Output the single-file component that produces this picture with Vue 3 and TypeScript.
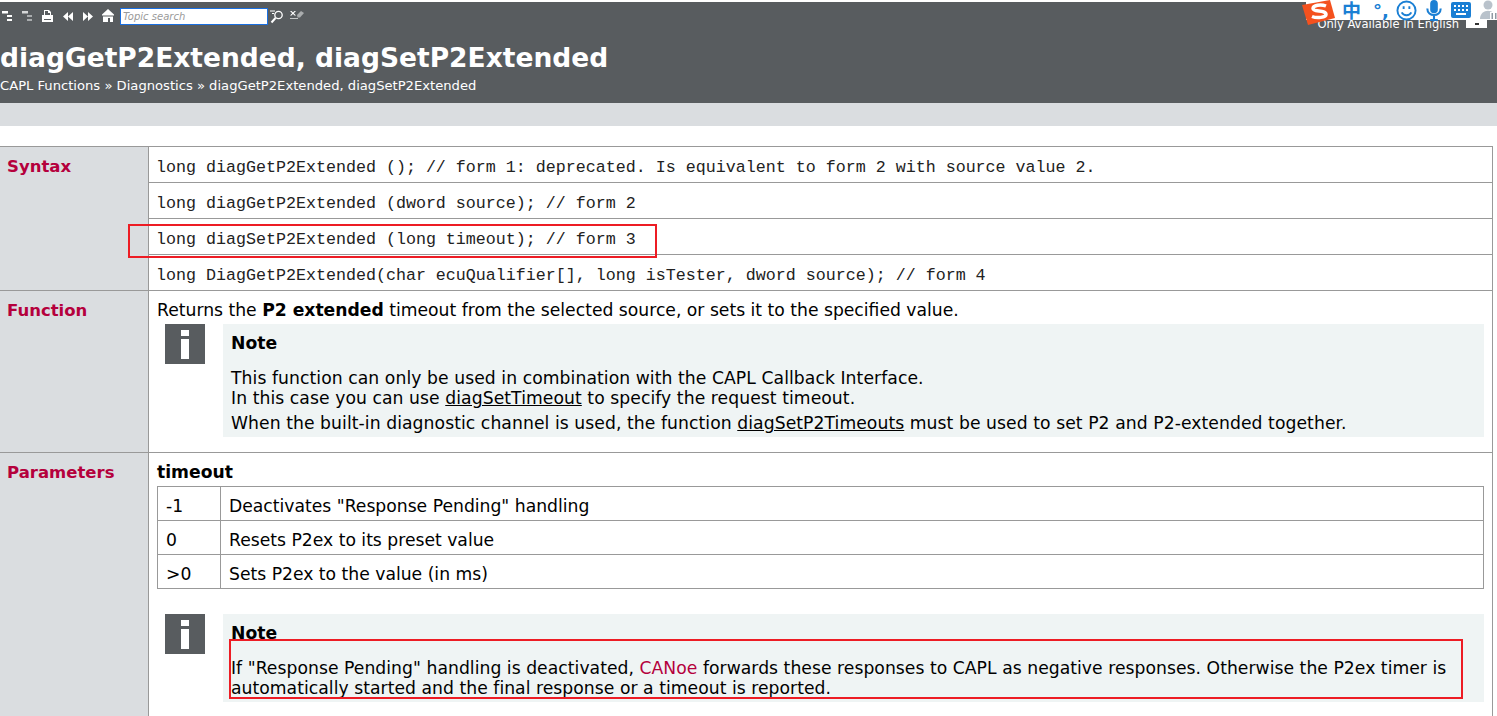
<script setup lang="ts">
const syntaxLines = [
  "long diagGetP2Extended (); // form 1: deprecated. Is equivalent to form 2 with source value 2.",
  "long diagGetP2Extended (dword source); // form 2",
  "long diagSetP2Extended (long timeout); // form 3",
  "long DiagGetP2Extended(char ecuQualifier[], long isTester, dword source); // form 4",
];

const params = [
  { value: "-1", text: 'Deactivates "Response Pending" handling' },
  { value: "0", text: "Resets P2ex to its preset value" },
  { value: ">0", text: "Sets P2ex to the value (in ms)" },
];
</script>

<template>
  <div class="page">
    <header class="header">
      <div class="toolbar">
        <div class="tools">
          <svg class="tool" viewBox="0 0 14 14" fill="#fff"><path d="M2 2h6v2.500H2zM7 6h5v2H7zM7 10h5v2H7z" /></svg>
          <svg class="tool" viewBox="0 0 14 14" fill="#a9acae"><path d="M2 2h6v2.500H2z" fill="#d5d7d8" /><path d="M7 6h5v2H7zM7 10h5v2H7z" /></svg>
          <svg class="tool" viewBox="0 0 14 14" fill="#fff"><path d="M4 1h5l2 2v3h2v7H2V6h2zM5 2v4h5V4H8V2zM4 10v1h7v-1z" fill-rule="evenodd" /></svg>
          <svg class="tool" viewBox="0 0 14 14" fill="#fff"><path d="M8 3v9L3 7.500zM13 3v9L8 7.500z" /></svg>
          <svg class="tool" viewBox="0 0 14 14" fill="#fff"><path d="M3 3v9l5-4.500zM8 3v9l5-4.500z" /></svg>
          <svg class="tool" viewBox="0 0 14 14" fill="#fff"><path d="M8 0 14 5.500v1H2v-1zM3 7.500h10V13h-3V9H8v4H3z" /></svg>
        </div>
        <input class="search" type="text" placeholder="Topic search" />
        <svg class="find" viewBox="0 0 14 14" fill="none" stroke="#fff"><circle cx="8.500" cy="5" r="3.700" stroke-width="1.300" /><path d="M5.500 8 1.500 12.500" stroke-width="2" /><path d="M0 1h5M2 3.500h2" stroke-width="1" /></svg>
        <svg class="clear" viewBox="0 0 15 12" fill="#fff"><path d="M0 1h1.500l1.500 1.500L4.500 1H6L3.800 3.200 6 5.500H4.500L3 4 1.500 5.500H0l2.200-2.300z" /><path d="M0 8h8v1H0z" fill="#c4c6c7" /><path d="M7 5l4-4 3 2-4 4.500H7.500z" fill="#a9acae" /></svg>
      </div>
      <h1 class="title">diagGetP2Extended, diagSetP2Extended</h1>
      <div class="crumbs">CAPL Functions » Diagnostics » diagGetP2Extended, diagSetP2Extended</div>
    </header>
    <div class="band"></div>

    <span class="lang">Only Available In English<span class="lang-box"><i></i></span></span>

    <div class="ime">
      <svg class="ime-logo" viewBox="0 0 34 25"><path d="M1 5 29 0l5 18-27 7z" fill="#f4511e" /><path d="M25 6c-5-2-13-1-13 2.500 0 4 13 1 13 6 0 3-9 4-14 2" fill="none" stroke="#fff" stroke-width="3.500" /></svg>
      <span class="ime-zh">中</span>
      <span class="ime-punct">°,</span>
      <svg class="ime-icon smile" viewBox="0 0 22 22" fill="none" stroke="#1a7fd4" stroke-width="2"><circle cx="11" cy="11" r="9.500" /><path d="M6 13c2 4 8 4 10 0" /><path d="M8 6.500v3M14 6.500v3" /></svg>
      <svg class="ime-icon mic" viewBox="0 0 16 22" fill="#1a7fd4"><rect x="4" y="0" width="8" height="14" rx="4" /><path d="M1 9c0 9 14 9 14 0M8 16v5M4 21h8" fill="none" stroke="#1a7fd4" stroke-width="2.200" /></svg>
      <svg class="ime-icon kbd" viewBox="0 0 20 16" fill="#1a7fd4"><path fill-rule="evenodd" d="M2 0h16a2 2 0 0 1 2 2v12a2 2 0 0 1-2 2H2a2 2 0 0 1-2-2V2a2 2 0 0 1 2-2zM3 3v2h2V3zm4 0v2h2V3zm4 0v2h2V3zm4 0v2h2V3zM3 7v2h2V7zm4 0v2h2V7zm4 0v2h2V7zm4 0v2h2V7zM5 11v2h10v-2z" /></svg>
      <svg class="ime-icon person" viewBox="0 0 18 20" fill="#b9c2cb"><circle cx="8" cy="5" r="4.500" /><path d="M0 19c0-11 16-11 16 0z" /><path d="M10 12h8v8h-8z" fill="#fff" /><path d="M11.500 13h1.500v6h-1.500zM15 13h1.500v6H15z" fill="#8f99a3" /></svg>
    </div>

    <main class="content">
      <section class="row">
        <div class="label">Syntax</div>
        <div class="body syntax">
          <div v-for="line in syntaxLines" :key="line" class="code">{{ line }}</div>
        </div>
      </section>

      <section class="row">
        <div class="label">Function</div>
        <div class="body function">
          <p class="lead">Returns the <b>P2 extended</b> timeout from the selected source, or sets it to the specified value.</p>
          <div class="note first">
            <div class="note-icon"><span class="dot"></span><span class="stem"></span></div>
            <div class="note-box">
              <div class="note-title">Note</div>
              <p>This function can only be used in combination with the CAPL Callback Interface.<br />In this case you can use <u>diagSetTimeout</u> to specify the request timeout.</p>
              <p>When the built-in diagnostic channel is used, the function <u>diagSetP2Timeouts</u> must be used to set P2 and P2-extended together.</p>
            </div>
          </div>
        </div>
      </section>

      <section class="row">
        <div class="label">Parameters</div>
        <div class="body parameters">
          <div class="param-name">timeout</div>
          <table class="param-table">
            <tbody>
              <tr v-for="p in params" :key="p.value">
                <td class="val">{{ p.value }}</td>
                <td>{{ p.text }}</td>
              </tr>
            </tbody>
          </table>
          <div class="note second">
            <div class="note-icon"><span class="dot"></span><span class="stem"></span></div>
            <div class="note-box">
              <div class="note-title">Note</div>
              <p>If "Response Pending" handling is deactivated, <span class="brand">CANoe</span> forwards these responses to CAPL as negative responses. Otherwise the P2ex timer is automatically started and the final response or a timeout is reported.</p>
            </div>
          </div>
        </div>
      </section>
    </main>

    <div class="mark mark-syntax"></div>
    <div class="mark mark-note"></div>
  </div>
</template>

<style>
html,
body {
  margin: 0;
  overflow: hidden;
}
</style>

<style scoped>
.page {
  position: relative;
  width: 1497px;
  height: 716px;
  overflow: hidden;
  background: #fff;
  font-family: "DejaVu Sans", Verdana, sans-serif;
  font-size: 17.2px;
  color: #000;
}

.header {
  margin-top: 2px;
  height: 101px;
  background: #585c5f;
  color: #fff;
}

.toolbar {
  display: flex;
  align-items: center;
  height: 26px;
  padding-top: 2px;
  box-sizing: border-box;
}

.tools {
  display: flex;
  gap: 6px;
  margin-right: 6px;
}

.tool {
  width: 14px;
  height: 14px;
}

.find {
  width: 14px;
  height: 14px;
  margin-left: 2px;
  margin-top: 1px;
}

.clear {
  width: 15px;
  height: 12px;
  margin-left: 6px;
}

.search {
  width: 148px;
  height: 17px;
  box-sizing: border-box;
  border: 1px solid #1a6fe0;
  outline: none;
  padding: 0 2px;
  margin: 0;
  font-family: "DejaVu Sans", Verdana, sans-serif;
  font-size: 10px;
  font-style: italic;
}

.search::placeholder {
  color: #9a9a9a;
}

.lang {
  position: absolute;
  right: 10px;
  top: 17px;
  display: flex;
  align-items: center;
  gap: 7px;
  font-size: 11.500px;
  color: #fff;
}

.lang-box {
  display: flex;
  align-items: center;
  justify-content: center;
  width: 21px;
  height: 8px;
  background: #fff;
}

.lang-box i {
  width: 4px;
  height: 2px;
  background: #333;
}

.title {
  margin: 0;
  padding-top: 13px;
  height: 49px;
  box-sizing: border-box;
  font-size: 26.500px;
  line-height: 34px;
  font-weight: 700;
}

.crumbs {
  font-size: 13.140px;
  line-height: 18px;
}

.band {
  height: 23px;
  background: #dadde0;
  margin-bottom: 20px;
}

.ime {
  position: absolute;
  top: 0;
  left: 1301px;
  right: 0;
  height: 26px;
  display: flex;
  align-items: flex-start;
  background: linear-gradient(#fff, #fff) 5px 0 / 100% 20px no-repeat;
}

.ime-logo {
  flex: none;
  width: 34px;
  height: 25px;
  margin-right: 7px;
}

.ime-zh {
  flex: none;
  font-family: "Noto Sans CJK SC", sans-serif;
  font-size: 19px;
  line-height: 20px;
  font-weight: 700;
  color: #1a7fd4;
  width: 31px;
}

.ime-punct {
  flex: none;
  font-size: 18px;
  line-height: 22px;
  font-weight: 700;
  color: #1a7fd4;
  width: 23px;
}

.ime-icon {
  flex: none;
  margin-top: 0;
}

.smile {
  width: 21px;
  height: 21px;
  margin-right: 9px;
}

.mic {
  width: 16px;
  height: 21px;
  margin-right: 9px;
}

.kbd {
  width: 20px;
  height: 16px;
  margin-top: 2px;
  margin-right: 9px;
}

.person {
  width: 18px;
  height: 20px;
}

.content {
  border-top: 1px solid #999;
  margin-right: 4px;
}

.row {
  display: grid;
  grid-template-columns: 149px 1fr;
  border-bottom: 1px solid #999;
}

.label {
  background: #dadde0;
  border-right: 1px solid #999;
  padding: 10px 7px;
  font-size: 16.500px;
  line-height: 20px;
  font-weight: 700;
  color: #b5003c;
}

.body {
  border-right: 1px solid #999;
}

.code {
  height: 35px;
  line-height: 42px;
  padding-left: 7px;
  font-family: "Liberation Mono", "Courier New", monospace;
  font-size: 16.670px;
  color: #222;
  border-bottom: 1px solid #999;
  white-space: pre;
  overflow: hidden;
}

.code:last-child {
  border-bottom: 0;
}

.function {
  height: 161px;
  padding-left: 8px;
  box-sizing: border-box;
}

.lead {
  margin: 0;
  padding-top: 9px;
  height: 33px;
  line-height: 20px;
  box-sizing: border-box;
}

.note {
  display: grid;
  grid-template-columns: 40px 1fr;
  column-gap: 18px;
  padding-left: 8px;
}

.note.first .note-box {
  letter-spacing: 0.07px;
}

.note.second .note-box {
  letter-spacing: 0.04px;
}

.note-icon {
  width: 40px;
  height: 40px;
  background: #585c5f;
  display: flex;
  flex-direction: column;
  align-items: center;
  padding-top: 6px;
  box-sizing: border-box;
}

.dot {
  width: 8px;
  height: 6px;
  background: #fff;
}

.stem {
  width: 8px;
  height: 20px;
  margin-top: 3px;
  background: #fff;
}

.note-box {
  background: #eff4f4;
  margin-right: 8px;
  padding: 9px 8px 4px;
  line-height: 20px;
}

.note-title {
  font-weight: 700;
  line-height: 20px;
  margin-bottom: 15px;
}

.note-box p {
  margin: 0;
}

.note-box p + p {
  margin-top: 5px;
}

.parameters {
  padding-left: 8px;
  height: 263px;
  box-sizing: border-box;
}

.param-name {
  font-weight: 700;
  line-height: 20px;
  padding-top: 9px;
  height: 33px;
  box-sizing: border-box;
}

.param-table {
  width: 1327px;
  border-collapse: collapse;
  table-layout: fixed;
}

.param-table td {
  border: 1px solid #999;
  height: 34px;
  padding: 4px 8px 0;
  box-sizing: border-box;
  line-height: 20px;
}

.param-table .val {
  width: 63px;
}

.note.second {
  margin-top: 25px;
}

.brand {
  color: #b5003c;
}

.mark {
  position: absolute;
  border: 2px solid #ed1c24;
  box-sizing: border-box;
}

.mark-syntax {
  left: 128px;
  top: 224px;
  width: 529px;
  height: 34px;
}

.mark-note {
  left: 229px;
  top: 639px;
  width: 1234px;
  height: 60px;
}
</style>
